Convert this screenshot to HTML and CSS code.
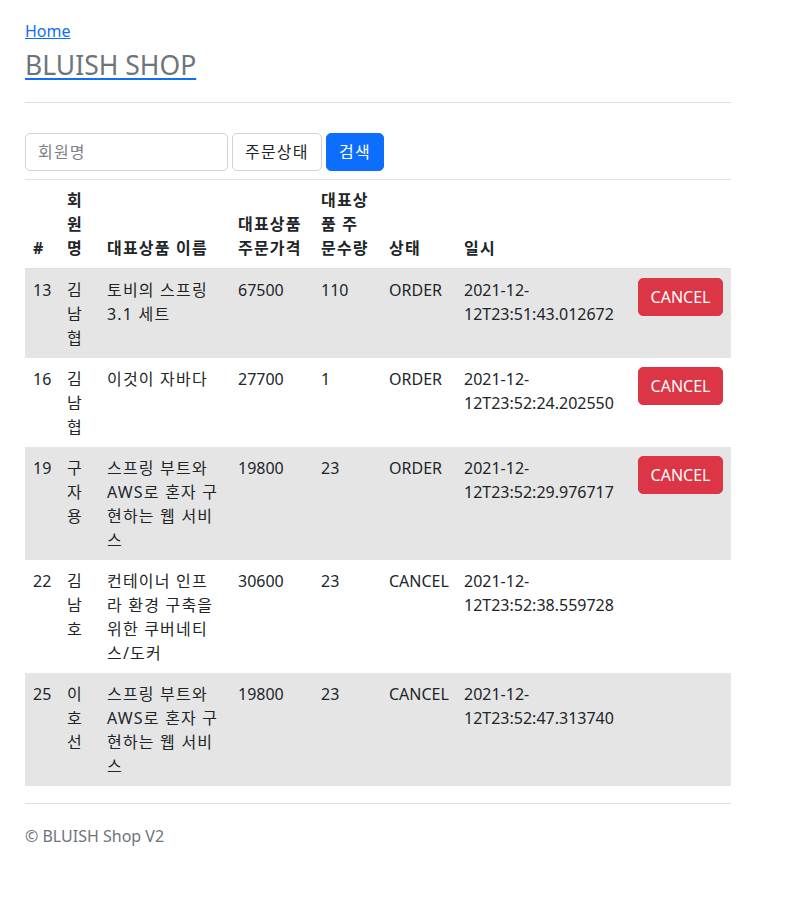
FILE: index.html
```html
<!DOCTYPE html>
<html lang="ko">
<head>
<meta charset="utf-8">
<title>BLUISH SHOP</title>
<link rel="stylesheet" href="styles.css">
</head>
<body>
<div class="page">
  <header class="site-header">
    <a class="home-link" href="#">Home</a>
    <h1 class="brand"><a href="#">BLUISH SHOP</a></h1>
  </header>
  <hr class="rule">
  <form class="search">
    <input class="field name-field ko" type="text" placeholder="회원명">
    <div class="field status-field ko">주문상태</div>
    <button class="btn btn-primary ko" type="button">검색</button>
  </form>
  <table class="orders">
    <colgroup>
      <col class="c-id"><col class="c-member"><col class="c-item"><col class="c-price"><col class="c-qty"><col class="c-status"><col class="c-date"><col class="c-action">
    </colgroup>
    <thead>
      <tr>
        <th>#</th>
        <th class="ko">회원명</th>
        <th class="ko">대표상품 이름</th>
        <th class="ko">대표상품 주문가격</th>
        <th class="ko">대표상품 주문수량</th>
        <th class="ko">상태</th>
        <th class="ko">일시</th>
        <th></th>
      </tr>
    </thead>
    <tbody>
      <tr class="odd">
        <td>13</td><td class="ko">김남협</td><td class="ko">토비의 스프링 3.1 세트</td><td>67500</td><td>110</td><td>ORDER</td><td>2021-12-12T23:51:43.012672</td>
        <td><button class="btn btn-danger" type="button">CANCEL</button></td>
      </tr>
      <tr>
        <td>16</td><td class="ko">김남협</td><td class="ko">이것이 자바다</td><td>27700</td><td>1</td><td>ORDER</td><td>2021-12-12T23:52:24.202550</td>
        <td><button class="btn btn-danger" type="button">CANCEL</button></td>
      </tr>
      <tr class="odd">
        <td>19</td><td class="ko">구자용</td><td class="ko">스프링 부트와 AWS로 혼자 구현하는 웹 서비스</td><td>19800</td><td>23</td><td>ORDER</td><td>2021-12-12T23:52:29.976717</td>
        <td><button class="btn btn-danger" type="button">CANCEL</button></td>
      </tr>
      <tr>
        <td>22</td><td class="ko">김남호</td><td class="ko">컨테이너 인프라 환경 구축을 위한 쿠버네티스/도커</td><td>30600</td><td>23</td><td>CANCEL</td><td>2021-12-12T23:52:38.559728</td>
        <td></td>
      </tr>
      <tr class="odd">
        <td>25</td><td class="ko">이호선</td><td class="ko">스프링 부트와 AWS로 혼자 구현하는 웹 서비스</td><td>19800</td><td>23</td><td>CANCEL</td><td>2021-12-12T23:52:47.313740</td>
        <td></td>
      </tr>
    </tbody>
  </table>
  <hr class="rule footer-rule">
  <footer class="site-footer">© BLUISH Shop V2</footer>
</div>
</body>
</html>
```
FILE: styles.css
```css
html, body {
  margin: 0;
  padding: 0;
  background: #fff;
}
body {
  font-family: "Noto Sans", "Noto Sans CJK KR", sans-serif;
  font-size: 16px;
  line-height: 24px;
  color: #212529;
}
.page {
  width: 706px;
  margin-left: 25px;
  padding-top: 19px;
}
.ko {
  letter-spacing: 1.2px;
}
.home-link {
  display: inline-block;
  color: #0d6efd;
  text-decoration: underline;
}
.brand {
  margin: 6px 0 0;
  font-size: 26.5px;
  line-height: 32px;
  font-weight: 400;
}
.brand a {
  color: #6c757d;
  text-decoration: underline;
  text-decoration-color: #0d6efd;
  text-underline-offset: 3px;
}
.rule {
  margin: 21px 0 0;
  border: 0;
  border-top: 1px solid #dedede;
  height: 0;
}
.search {
  display: flex;
  gap: 4px;
  margin-top: 30px;
  padding-bottom: 8px;
  border-bottom: 1px solid #dee2e6;
}
.field {
  box-sizing: border-box;
  height: 38px;
  border: 1px solid #ced4da;
  border-radius: 5px;
  padding: 6px 12px;
  font: inherit;
  color: #212529;
  background: #fff;
}
.name-field {
  width: 203px;
}
.name-field::placeholder {
  color: #7b8085;
}
.status-field {
  width: 90px;
}
.btn {
  box-sizing: border-box;
  height: 38px;
  border: 1px solid transparent;
  border-radius: 5px;
  padding: 6px 12px;
  font: inherit;
  color: #fff;
  cursor: pointer;
}
.btn-primary {
  background: #0d6efd;
  border-color: #0d6efd;
  width: 58px;
  padding: 6px 0;
  letter-spacing: 1.2px;
}
.btn-danger {
  background: #dc3545;
  border-color: #dc3545;
  width: 85px;
  padding: 6px 0;
  display: block;
}
.orders {
  width: 706px;
  table-layout: fixed;
  border-collapse: collapse;
}
.c-id { width: 34px; }
.c-member { width: 40px; }
.c-item { width: 131px; }
.c-price { width: 83px; }
.c-qty { width: 68px; }
.c-status { width: 75px; }
.c-date { width: 174px; }
.c-action { width: 101px; }
.orders th {
  text-align: left;
  vertical-align: bottom;
  font-weight: 700;
  padding: 8px 8px 8px;
  border-bottom: 1px solid #dee2e6;
}
.orders td {
  vertical-align: top;
  padding: 9px 8px 8px;
}
.orders tr.odd td {
  background: #e5e5e5;
}
.footer-rule {
  margin-top: 17px;
}
.site-footer {
  margin-top: 20px;
  color: #6c757d;
}
```
